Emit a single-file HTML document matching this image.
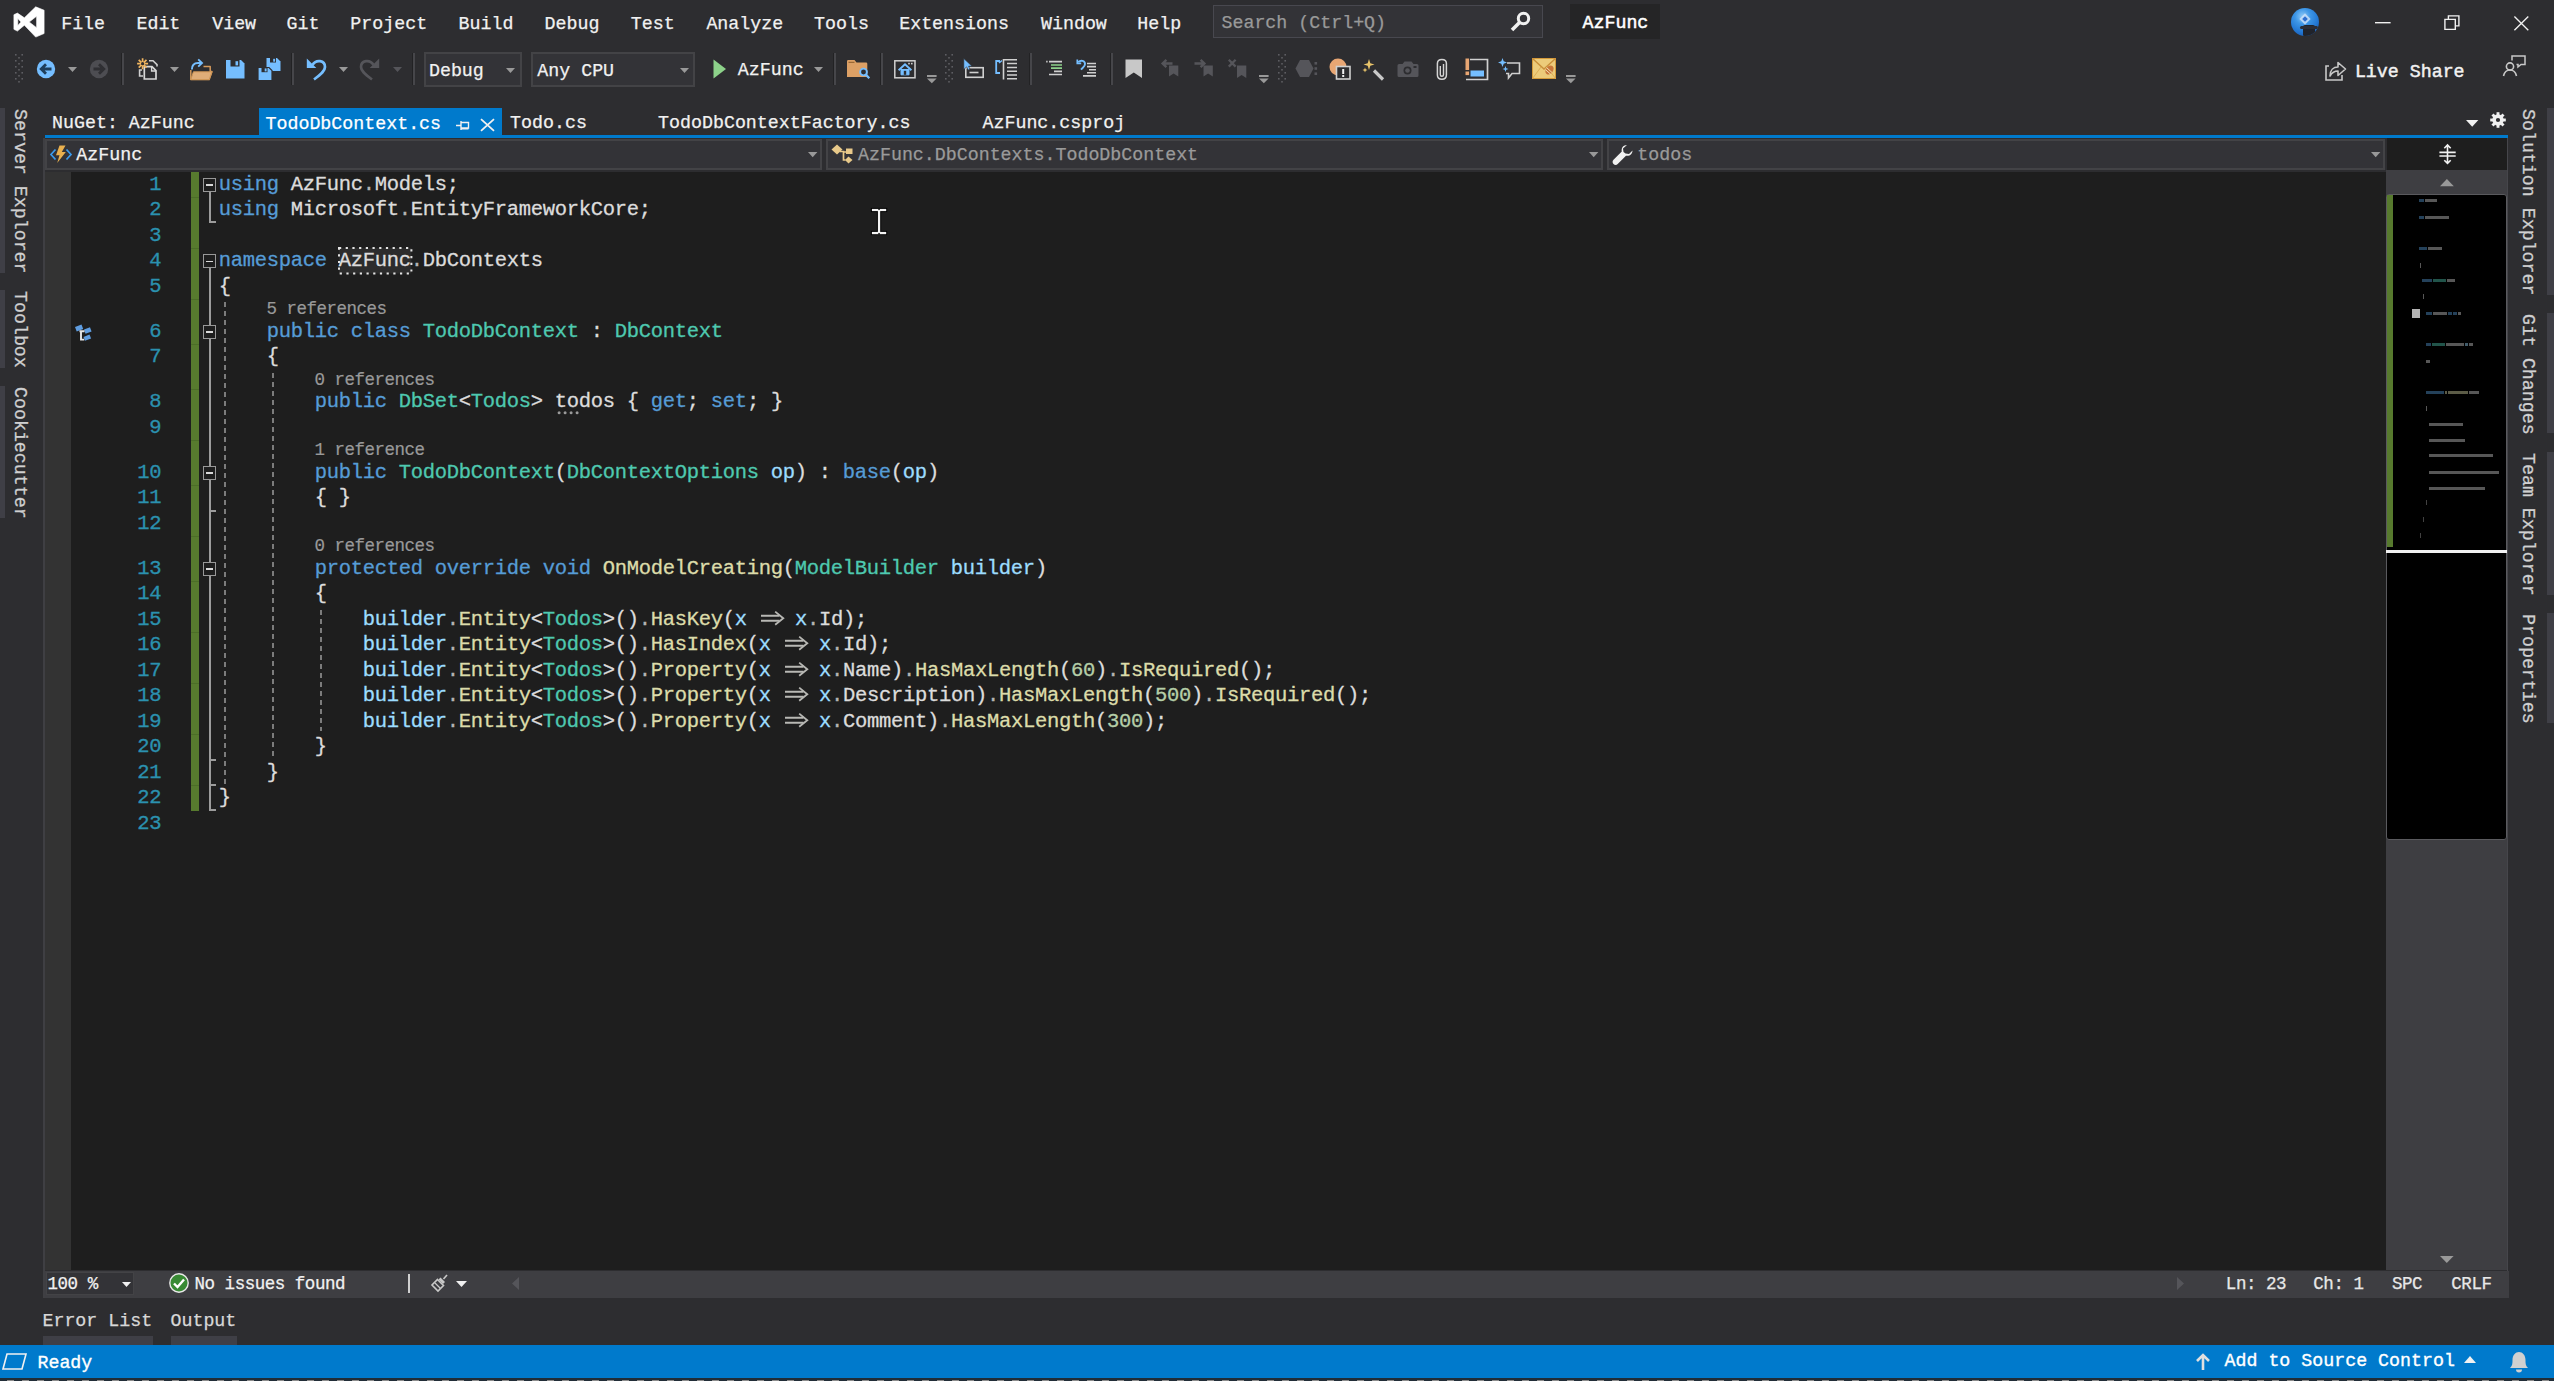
<!DOCTYPE html><html><head><meta charset="utf-8"><title>AzFunc</title><style>
*{box-sizing:border-box;margin:0;padding:0}
html,body{width:2554px;height:1381px;overflow:hidden;background:#2d2d30}
body{position:relative;font-family:"Liberation Mono",monospace;color:#f1f1f1;font-size:18px;line-height:1}
.a{position:absolute}
.t{position:absolute;white-space:pre;line-height:24px;height:24px}
.ui{-webkit-text-stroke:0.25px currentColor}
svg{position:absolute;overflow:visible}
.code{position:absolute;white-space:pre;font-size:20.5px;letter-spacing:-0.302px;line-height:25.5px;height:25.5px;color:#dcdcdc;left:218.7px;-webkit-text-stroke:0.3px currentColor}
.ln{position:absolute;white-space:pre;font-size:20.5px;letter-spacing:-0.302px;line-height:25.5px;height:25.5px;color:#2b91af;left:71px;width:90.3px;text-align:right;-webkit-text-stroke:0.3px currentColor}
.cl{position:absolute;white-space:pre;font-size:17.5px;letter-spacing:-0.502px;line-height:19.5px;height:19.5px;color:#999;-webkit-text-stroke:0.2px currentColor}
.k{color:#569cd6}.c{color:#4ec9b0}.m{color:#dcdcaa}.v{color:#9cdcfe}.o{color:#b4b4b4}.n{color:#b5cea8}
.arr{display:inline-block;width:24px;height:25.5px;position:relative;vertical-align:top}
.vt{position:absolute;white-space:pre;font-size:18.3px;line-height:20px;height:20px;color:#d0d0d0;transform-origin:0 0;transform:rotate(90deg);-webkit-text-stroke:0.3px currentColor}
</style></head><body>
<svg style="left:0px;top:0px" width="50" height="44" viewBox="0 0 50 44"><path d="M35.7 6.85L44.1 10.2V33.5L35.7 37.1L24.4 25.2L17.4 31.1L13.9 29.3V14.7L17.4 13.1L24.4 17.8Z M36.6 16.25V27.7L29.2 22Z M17.8 18.5V25.5L21 22Z" fill="#ffffff" fill-rule="evenodd" stroke="#fff" stroke-width="0.6" stroke-linejoin="round"/></svg>
<div class="t ui" style="left:61.17px;top:12.13px;color:#f1f1f1;font-size:18.3px;letter-spacing:0px;">File</div>
<div class="t ui" style="left:136.45px;top:12.13px;color:#f1f1f1;font-size:18.3px;letter-spacing:0px;">Edit</div>
<div class="t ui" style="left:212.21px;top:12.13px;color:#f1f1f1;font-size:18.3px;letter-spacing:0px;">View</div>
<div class="t ui" style="left:286.59px;top:12.13px;color:#f1f1f1;font-size:18.3px;letter-spacing:0px;">Git</div>
<div class="t ui" style="left:350.35px;top:12.13px;color:#f1f1f1;font-size:18.3px;letter-spacing:0px;">Project</div>
<div class="t ui" style="left:458.55px;top:12.13px;color:#f1f1f1;font-size:18.3px;letter-spacing:0px;">Build</div>
<div class="t ui" style="left:544.55px;top:12.13px;color:#f1f1f1;font-size:18.3px;letter-spacing:0px;">Debug</div>
<div class="t ui" style="left:630.82px;top:12.13px;color:#f1f1f1;font-size:18.3px;letter-spacing:0px;">Test</div>
<div class="t ui" style="left:706.40px;top:12.13px;color:#f1f1f1;font-size:18.3px;letter-spacing:0px;">Analyze</div>
<div class="t ui" style="left:814.02px;top:12.13px;color:#f1f1f1;font-size:18.3px;letter-spacing:0px;">Tools</div>
<div class="t ui" style="left:899.20px;top:12.13px;color:#f1f1f1;font-size:18.3px;letter-spacing:0px;">Extensions</div>
<div class="t ui" style="left:1041.00px;top:12.13px;color:#f1f1f1;font-size:18.3px;letter-spacing:0px;">Window</div>
<div class="t ui" style="left:1137.25px;top:12.13px;color:#f1f1f1;font-size:18.3px;letter-spacing:0px;">Help</div>
<div class="a" style="left:1213px;top:5px;width:330px;height:33px;background:#333337;border:1.5px solid #48484f"></div>
<div class="t ui" style="left:1221.49px;top:11.03px;color:#999;font-size:18.3px;letter-spacing:0px;">Search (Ctrl+Q)</div>
<svg style="left:1508px;top:10px" width="24" height="24" viewBox="0 0 24 24"><circle cx="15.5" cy="8.5" r="5.2" fill="none" stroke="#f1f1f1" stroke-width="3"/><path d="M11.5 12.5 L4 20" stroke="#f1f1f1" stroke-width="3.6" stroke-linecap="butt"/></svg>
<div class="a" style="left:1570px;top:4px;width:90px;height:35px;background:#252526;"></div>
<div class="t ui" style="left:1582.50px;top:11.03px;color:#ffffff;font-size:18.3px;letter-spacing:0px;-webkit-text-stroke:0.5px #fff">AzFunc</div>
<div class="a" style="left:2291px;top:8.3px;width:28px;height:28px;border-radius:50%;background:radial-gradient(circle at 42% 30%,#8ec9f7 0%,#3d96e6 30%,#2378d4 60%,#14489a 100%);overflow:hidden"><div class="a" style="left:11.5px;top:17px;width:12px;height:11px;background:#20232b;border-radius:2px 2px 1px 1px"></div><div class="a" style="left:8.5px;top:18px;width:18px;height:3px;background:#2a2d36;border-radius:2px"></div><div class="a" style="left:9.5px;top:6.5px;width:8px;height:8px;background:#d5e6fa;opacity:.75;transform:rotate(45deg)"></div><div class="a" style="left:11.5px;top:8.5px;width:4px;height:4px;background:#2e6fd0;transform:rotate(45deg)"></div></div>
<svg style="left:2375px;top:21.5px" width="16" height="2" viewBox="0 0 16 2"><rect width="15.6" height="1.4" fill="#f1f1f1"/></svg>
<svg style="left:2444px;top:15.3px" width="16" height="16" viewBox="0 0 16 16"><path d="M0.9 4.4H11.3V14.4H0.9Z M4.4 4.4V0.9H14.9V10.9H11.3" fill="none" stroke="#f1f1f1" stroke-width="1.4"/></svg>
<svg style="left:2513.5px;top:15.8px" width="15" height="15" viewBox="0 0 15 15"><path d="M0.4 0.4L14.3 14.3M14.3 0.4L0.4 14.3" stroke="#f1f1f1" stroke-width="1.35"/></svg>
<svg style="left:14.5px;top:54px" width="8" height="30" viewBox="0 0 8 30"><rect x="0" y="0" width="1.6" height="1.6" fill="#5e5e62"/><rect x="6.4" y="0" width="1.6" height="1.6" fill="#5e5e62"/><rect x="3.2" y="3" width="1.6" height="1.6" fill="#5e5e62"/><rect x="0" y="6" width="1.6" height="1.6" fill="#5e5e62"/><rect x="6.4" y="6" width="1.6" height="1.6" fill="#5e5e62"/><rect x="3.2" y="9" width="1.6" height="1.6" fill="#5e5e62"/><rect x="0" y="12" width="1.6" height="1.6" fill="#5e5e62"/><rect x="6.4" y="12" width="1.6" height="1.6" fill="#5e5e62"/><rect x="3.2" y="15" width="1.6" height="1.6" fill="#5e5e62"/><rect x="0" y="18" width="1.6" height="1.6" fill="#5e5e62"/><rect x="6.4" y="18" width="1.6" height="1.6" fill="#5e5e62"/><rect x="3.2" y="21" width="1.6" height="1.6" fill="#5e5e62"/><rect x="0" y="24" width="1.6" height="1.6" fill="#5e5e62"/><rect x="6.4" y="24" width="1.6" height="1.6" fill="#5e5e62"/><rect x="3.2" y="27" width="1.6" height="1.6" fill="#5e5e62"/></svg>
<svg style="left:36px;top:59px" width="20" height="20" viewBox="0 0 20 20"><circle cx="10" cy="10" r="9.2" fill="#75beff"/><path d="M15.5 10H6.5M10 5.2L5.2 10L10 14.8" stroke="#1f3f5c" stroke-width="2.8" fill="none"/></svg>
<svg style="left:67.5px;top:67.0px" width="9" height="5.0" viewBox="0 0 9 5.0"><path d="M0 0H9L4.5 5.0Z" fill="#999"/></svg>
<svg style="left:89px;top:59px" width="20" height="20" viewBox="0 0 20 20"><circle cx="10" cy="10" r="9.2" fill="#4d4d52"/><path d="M4.5 10H13.5M10 5.2L14.8 10L10 14.8" stroke="#2f2f33" stroke-width="2.8" fill="none"/></svg>
<div class="a" style="left:120.5px;top:53px;width:1.7px;height:32px;background:#222224;"></div>
<div class="a" style="left:122.2px;top:53px;width:1.8px;height:32px;background:#46464a;"></div>
<svg style="left:137px;top:58px" width="22" height="24" viewBox="0 0 22 24"><path d="M12 2.7H16L20 6.6V8.5" fill="none" stroke="#d0d0d0" stroke-width="1.6"/><path d="M5 12H2.6V18H6" fill="none" stroke="#d0d0d0" stroke-width="1.6"/><path d="M7.3 8.6H15L19 12.6V21H7.3Z" fill="#2d2d30" stroke="#d8d8d8" stroke-width="1.7"/><path d="M14.6 8.6V13H19" fill="none" stroke="#d8d8d8" stroke-width="1.4"/><g stroke="#f0b560" stroke-width="1.7"><path d="M5.6 0.2V11.2M0.1 5.7H11.1M1.7 1.8L9.5 9.6M9.5 1.8L1.7 9.6"/></g><circle cx="5.6" cy="5.7" r="1.6" fill="#2d2d30"/></svg>
<svg style="left:169.5px;top:67.0px" width="9" height="5.0" viewBox="0 0 9 5.0"><path d="M0 0H9L4.5 5.0Z" fill="#999"/></svg>
<svg style="left:189px;top:57px" width="24" height="24" viewBox="0 0 24 24"><path d="M1.8 13V22.6H20.2L23 14.6H21.2V9.6H14.5" fill="none" stroke="#d49a5c" stroke-width="1.5" stroke-linejoin="round"/><path d="M4.4 14.8H23L20.2 22.6H1.8Z" fill="#e0ad78" stroke="#cf9555" stroke-width="1"/><path d="M2.9 12.6C2.9 8 5.5 6 9 6H12.4" fill="none" stroke="#75beff" stroke-width="1.9"/><path d="M9.2 2.4L13 6L9.2 9.6" fill="none" stroke="#75beff" stroke-width="1.9"/></svg>
<svg style="left:226px;top:60px" width="19" height="19" viewBox="0 0 19 19"><path d="M0 0H15L18.5 3.5V18.5H0Z" fill="#75beff"/><rect x="4.5" y="0" width="9" height="6.5" fill="#2d2d30"/><rect x="9.5" y="1.2" width="2.6" height="4.2" fill="#75beff"/></svg>
<svg style="left:258px;top:58px" width="23" height="23" viewBox="0 0 23 23"><path d="M8.5 0H19L22.5 3.5V13H8.5Z" fill="#75beff"/><rect x="12" y="0" width="6" height="4.5" fill="#2d2d30"/><rect x="15.2" y="0.8" width="1.9" height="2.9" fill="#75beff"/><path d="M0 9.5H11L14 12.5V22.5H0Z" fill="#75beff" stroke="#2d2d30" stroke-width="1.2"/><rect x="3.5" y="9.8" width="6" height="4.4" fill="#2d2d30"/><rect x="6.7" y="10.4" width="1.9" height="3" fill="#75beff"/></svg>
<div class="a" style="left:290.5px;top:53px;width:1.7px;height:32px;background:#222224;"></div>
<div class="a" style="left:292.2px;top:53px;width:1.8px;height:32px;background:#46464a;"></div>
<svg style="left:305px;top:58px" width="22" height="24" viewBox="0 0 22 24"><path d="M1.8 0.5V10H11.3Z" fill="#75beff"/><path d="M7.5 7C11 1 20 2 20 9C20 13 16.5 16 9 21.5" fill="none" stroke="#75beff" stroke-width="2.7"/></svg>
<svg style="left:338.5px;top:67.0px" width="9" height="5.0" viewBox="0 0 9 5.0"><path d="M0 0H9L4.5 5.0Z" fill="#999"/></svg>
<svg style="left:359px;top:58px" width="22" height="24" viewBox="0 0 22 24"><path d="M20.2 0.5V10H10.7Z" fill="#55555a"/><path d="M14.5 7C11 1 2 2 2 9C2 13 5.5 16 13 21.5" fill="none" stroke="#55555a" stroke-width="2.7"/></svg>
<svg style="left:392.5px;top:67.0px" width="9" height="5.0" viewBox="0 0 9 5.0"><path d="M0 0H9L4.5 5.0Z" fill="#55555a"/></svg>
<div class="a" style="left:411.5px;top:53px;width:1.7px;height:32px;background:#222224;"></div>
<div class="a" style="left:413.2px;top:53px;width:1.8px;height:32px;background:#46464a;"></div>
<div class="a" style="left:424px;top:52px;width:98px;height:35px;background:#333337;border:2px solid #434346"></div>
<div class="t ui" style="left:428.95px;top:58.63px;color:#f1f1f1;font-size:18.3px;letter-spacing:0px;">Debug</div>
<svg style="left:505.5px;top:67.5px" width="9" height="5.0" viewBox="0 0 9 5.0"><path d="M0 0H9L4.5 5.0Z" fill="#999"/></svg>
<div class="a" style="left:531px;top:52px;width:164px;height:35px;background:#333337;border:2px solid #434346"></div>
<div class="t ui" style="left:537.30px;top:58.63px;color:#f1f1f1;font-size:18.3px;letter-spacing:0px;">Any CPU</div>
<svg style="left:679.5px;top:67.5px" width="9" height="5.0" viewBox="0 0 9 5.0"><path d="M0 0H9L4.5 5.0Z" fill="#999"/></svg>
<svg style="left:713px;top:59px" width="14" height="20" viewBox="0 0 14 20"><path d="M0.5 0.5L13 10L0.5 19.5Z" fill="#8dd28a"/></svg>
<div class="t ui" style="left:737.80px;top:58.13px;color:#f1f1f1;font-size:18.3px;letter-spacing:0px;">AzFunc</div>
<svg style="left:813.5px;top:67.0px" width="9" height="5.0" viewBox="0 0 9 5.0"><path d="M0 0H9L4.5 5.0Z" fill="#999"/></svg>
<div class="a" style="left:832.5px;top:53px;width:1.7px;height:32px;background:#222224;"></div>
<div class="a" style="left:834.2px;top:53px;width:1.8px;height:32px;background:#46464a;"></div>
<svg style="left:846px;top:58px" width="25" height="24" viewBox="0 0 25 24"><path d="M1 3.2Q1 2 2.2 2H8.5L10.5 4.5H20Q21.3 4.5 21.3 5.8V19H1Z" fill="#dca065"/><path d="M2.5 4.3H8.5" stroke="#8a5a2a" stroke-width="1"/><circle cx="17.5" cy="14" r="3.4" fill="#2d2d30" stroke="#75beff" stroke-width="1.9"/><path d="M19.8 16.6L23.3 20.2" stroke="#75beff" stroke-width="2.3"/></svg>
<div class="a" style="left:879.5px;top:53px;width:1.7px;height:32px;background:#222224;"></div>
<div class="a" style="left:881.2px;top:53px;width:1.8px;height:32px;background:#46464a;"></div>
<svg style="left:894px;top:59.8px" width="22" height="20" viewBox="0 0 22 20"><rect x="0.8" y="0.8" width="20.2" height="17" fill="none" stroke="#d0d0d0" stroke-width="1.5"/><path d="M4.6 10.2L11 4.4L17.4 10.2" fill="none" stroke="#75beff" stroke-width="1.9"/><path d="M7 9V14.8H15V9" fill="#75beff" stroke="#75beff" stroke-width="1"/><rect x="9.8" y="10.8" width="2.4" height="4" fill="#2d2d30"/><rect x="14.2" y="2.8" width="1.6" height="1.6" fill="#d0d0d0"/><rect x="17" y="2.8" width="1.6" height="1.6" fill="#d0d0d0"/></svg>
<svg style="left:926.8px;top:75.1px" width="10" height="9" viewBox="0 0 10 9"><rect x="0" y="0" width="9.6" height="2" fill="#999"/><path d="M0 3.6H9.6L4.8 8.2Z" fill="#999"/></svg>
<svg style="left:945px;top:54px" width="8" height="30" viewBox="0 0 8 30"><rect x="0" y="0" width="1.6" height="1.6" fill="#5e5e62"/><rect x="6.4" y="0" width="1.6" height="1.6" fill="#5e5e62"/><rect x="3.2" y="3" width="1.6" height="1.6" fill="#5e5e62"/><rect x="0" y="6" width="1.6" height="1.6" fill="#5e5e62"/><rect x="6.4" y="6" width="1.6" height="1.6" fill="#5e5e62"/><rect x="3.2" y="9" width="1.6" height="1.6" fill="#5e5e62"/><rect x="0" y="12" width="1.6" height="1.6" fill="#5e5e62"/><rect x="6.4" y="12" width="1.6" height="1.6" fill="#5e5e62"/><rect x="3.2" y="15" width="1.6" height="1.6" fill="#5e5e62"/><rect x="0" y="18" width="1.6" height="1.6" fill="#5e5e62"/><rect x="6.4" y="18" width="1.6" height="1.6" fill="#5e5e62"/><rect x="3.2" y="21" width="1.6" height="1.6" fill="#5e5e62"/><rect x="0" y="24" width="1.6" height="1.6" fill="#5e5e62"/><rect x="6.4" y="24" width="1.6" height="1.6" fill="#5e5e62"/><rect x="3.2" y="27" width="1.6" height="1.6" fill="#5e5e62"/></svg>
<svg style="left:962px;top:58px" width="22" height="22" viewBox="0 0 22 22"><rect x="3.8" y="9.7" width="17.4" height="9.6" fill="none" stroke="#d0d0d0" stroke-width="1.6"/><path d="M7.5 14.5H16.5" stroke="#d0d0d0" stroke-width="1.6"/><path d="M1.8 0.6V11.4L4.7 8.9L6.2 12L8 11.2L6.6 8.2H10Z" fill="#75beff" stroke="#2d2d30" stroke-width="0.6"/></svg>
<svg style="left:995px;top:58px" width="24" height="24" viewBox="0 0 24 24"><path d="M5 3H1.2V15H5" fill="none" stroke="#75beff" stroke-width="1.8"/><path d="M4 5L7 2.5" stroke="#75beff" stroke-width="1.6"/><path d="M8.5 1V21.5" stroke="#d0d0d0" stroke-width="1.6"/><path d="M8.5 1.8H22M12 5.6H22M12 9.4H22M12 13.2H22M12 17H22M12 20.8H22" stroke="#d0d0d0" stroke-width="1.5"/></svg>
<div class="a" style="left:1028.5px;top:53px;width:1.7px;height:32px;background:#222224;"></div>
<div class="a" style="left:1030.2px;top:53px;width:1.8px;height:32px;background:#46464a;"></div>
<svg style="left:1045px;top:60px" width="18" height="16" viewBox="0 0 18 16"><path d="M1.2 1.6H2.6M4 1.6H17" stroke="#d0d0d0" stroke-width="1.7"/><path d="M6 5H17M6 8.2H17" stroke="#8dd28a" stroke-width="1.7"/><path d="M9 11.3H17M4 14.5H17" stroke="#d0d0d0" stroke-width="1.7"/></svg>
<svg style="left:1076px;top:59px" width="21" height="19" viewBox="0 0 21 19"><path d="M2.2 3.2C4.8 0.6 9 1.6 9 5C9 7.6 6.6 8.4 5 10.6" fill="none" stroke="#75beff" stroke-width="1.9"/><path d="M1.3 0.6V4.4H5.2" fill="none" stroke="#75beff" stroke-width="1.7"/><path d="M11 4.5H20M11 7.6H20M13 10.7H20M11 13.8H20M7 16.9H20" stroke="#d0d0d0" stroke-width="1.6"/></svg>
<div class="a" style="left:1109.5px;top:53px;width:1.7px;height:32px;background:#222224;"></div>
<div class="a" style="left:1111.2px;top:53px;width:1.8px;height:32px;background:#46464a;"></div>
<svg style="left:1125px;top:59px" width="18" height="20" viewBox="0 0 18 20"><path d="M0.5 0.5H17V19L8.8 13.5L0.5 19Z" fill="#c8c8c8"/></svg>
<svg style="left:1160px;top:59px" width="20" height="20" viewBox="0 0 20 20"><path d="M9 6.5H18.3V17.5L13.6 14.5L9 17.5Z" fill="#55555a"/><path d="M12.5 4.5H3M6.4 0.8L2.6 4.5L6.4 8.2" stroke="#55555a" stroke-width="2.4" fill="none"/></svg>
<svg style="left:1194px;top:59px" width="20" height="20" viewBox="0 0 20 20"><path d="M9.5 6.5H18.8V17.5L14.1 14.5L9.5 17.5Z" fill="#55555a"/><path d="M0.5 4.5H10M6.6 0.8L10.4 4.5L6.6 8.2" stroke="#55555a" stroke-width="2.4" fill="none"/></svg>
<svg style="left:1228px;top:59px" width="20" height="20" viewBox="0 0 20 20"><path d="M9 6.5H18.3V19L13.6 16L9 19Z" fill="#55555a"/><path d="M0.8 0.8L7.6 7.6M7.6 0.8L0.8 7.6" stroke="#55555a" stroke-width="2.3" fill="none"/></svg>
<svg style="left:1259.3px;top:75.1px" width="10" height="9" viewBox="0 0 10 9"><rect x="0" y="0" width="9.6" height="2" fill="#999"/><path d="M0 3.6H9.6L4.8 8.2Z" fill="#999"/></svg>
<svg style="left:1278px;top:54px" width="8" height="30" viewBox="0 0 8 30"><rect x="0" y="0" width="1.6" height="1.6" fill="#5e5e62"/><rect x="6.4" y="0" width="1.6" height="1.6" fill="#5e5e62"/><rect x="3.2" y="3" width="1.6" height="1.6" fill="#5e5e62"/><rect x="0" y="6" width="1.6" height="1.6" fill="#5e5e62"/><rect x="6.4" y="6" width="1.6" height="1.6" fill="#5e5e62"/><rect x="3.2" y="9" width="1.6" height="1.6" fill="#5e5e62"/><rect x="0" y="12" width="1.6" height="1.6" fill="#5e5e62"/><rect x="6.4" y="12" width="1.6" height="1.6" fill="#5e5e62"/><rect x="3.2" y="15" width="1.6" height="1.6" fill="#5e5e62"/><rect x="0" y="18" width="1.6" height="1.6" fill="#5e5e62"/><rect x="6.4" y="18" width="1.6" height="1.6" fill="#5e5e62"/><rect x="3.2" y="21" width="1.6" height="1.6" fill="#5e5e62"/><rect x="0" y="24" width="1.6" height="1.6" fill="#5e5e62"/><rect x="6.4" y="24" width="1.6" height="1.6" fill="#5e5e62"/><rect x="3.2" y="27" width="1.6" height="1.6" fill="#5e5e62"/></svg>
<svg style="left:1295px;top:59px" width="24" height="20" viewBox="0 0 24 20"><path d="M5 1H14L18.5 9.5L14 18H5L0.5 9.5Z" fill="#55555a"/><rect x="19.5" y="3" width="2.6" height="2.6" fill="#55555a"/><rect x="19.5" y="8.2" width="2.6" height="2.6" fill="#55555a"/><rect x="19.5" y="13.4" width="2.6" height="2.6" fill="#55555a"/></svg>
<svg style="left:1329px;top:58px" width="23" height="23" viewBox="0 0 23 23"><circle cx="9" cy="9" r="8.5" fill="#e8a673"/><rect x="7.5" y="8.5" width="13.5" height="12.5" fill="#2d2d30" stroke="#d0d0d0" stroke-width="1.6"/><rect x="13.2" y="11" width="2" height="5" fill="#f1f1f1"/><rect x="13.2" y="17" width="2" height="2" fill="#f1f1f1"/></svg>
<svg style="left:1362px;top:58px" width="23" height="23" viewBox="0 0 23 23"><path d="M12 12.5L21 21.5" stroke="#c8c8c8" stroke-width="3.2"/><path d="M7 1L8.3 5.2L12.5 6.5L8.3 7.8L7 12L5.7 7.8L1.5 6.5L5.7 5.2Z" fill="#e9c46a"/><path d="M3 9.5L3.7 11.3L5.5 12L3.7 12.7L3 14.5L2.3 12.7L0.5 12L2.3 11.3Z" fill="#e9c46a"/></svg>
<svg style="left:1397px;top:61px" width="23" height="17" viewBox="0 0 23 17"><path d="M0.5 4.5Q0.5 3 2 3H5.5L7.5 0.5H14.5L16.5 3H20Q21.5 3 21.5 4.5V14.5Q21.5 16 20 16H2Q0.5 16 0.5 14.5Z" fill="#55555a"/><circle cx="10.5" cy="9.5" r="4" fill="#2d2d30"/><circle cx="10.5" cy="9.5" r="2.3" fill="#55555a"/><rect x="16.5" y="5" width="3" height="2" fill="#2d2d30"/></svg>
<svg style="left:1435px;top:58px" width="14" height="23" viewBox="0 0 14 23"><path d="M2.4 9.5V5.6Q2.4 1.6 6.9 1.6Q11.4 1.6 11.4 5.6V17Q11.4 21.2 6.9 21.2Q2.4 21.2 2.4 17V9.5" fill="none" stroke="#d4d4d4" stroke-width="1.5"/><path d="M5.3 8V16.8Q5.3 18.3 6.9 18.3Q8.5 18.3 8.5 16.8V6" fill="none" stroke="#d4d4d4" stroke-width="1.4"/></svg>
<svg style="left:1465px;top:58px" width="24" height="23" viewBox="0 0 24 23"><path d="M5 1.5H22.5V21.5H1" fill="none" stroke="#d0d0d0" stroke-width="1.7"/><rect x="0.5" y="0.5" width="3.6" height="11.5" fill="#e8a673"/><rect x="0.5" y="13.5" width="3.6" height="3.6" fill="#e8a673"/><rect x="5.5" y="12.5" width="13.5" height="6" fill="#75beff"/></svg>
<svg style="left:1498px;top:58px" width="24" height="23" viewBox="0 0 24 23"><path d="M9 4H21.5V14.5H14L10.5 19V14.5H8" fill="none" stroke="#d0d0d0" stroke-width="1.6" transform="translate(0,1)"/><path d="M4.5 0L5.7 3.3L9 4.5L5.7 5.7L4.5 9L3.3 5.7L0 4.5L3.3 3.3Z" fill="#75beff"/><path d="M7.5 8L8.3 10.2L10.5 11L8.3 11.8L7.5 14L6.7 11.8L4.5 11L6.7 10.2Z" fill="#75beff"/></svg>
<svg style="left:1532px;top:58px" width="25" height="22" viewBox="0 0 25 22"><rect x="0.5" y="0.5" width="23" height="20" fill="#eccb7a" stroke="#d49a3a" stroke-width="1"/><path d="M0.5 0.5L12 11L23.5 0.5" fill="none" stroke="#c98f3a" stroke-width="1.4"/><path d="M0.5 20.5L9 9M23.5 20.5L15 9" fill="none" stroke="#dcae58" stroke-width="1"/><ellipse cx="17.5" cy="12" rx="3.6" ry="5" fill="#c8763a" transform="rotate(35 17.5 12)"/><path d="M14.5 9.5L20 14.5M13.8 12L18.8 16.3" stroke="#f0e0b0" stroke-width="1"/></svg>
<svg style="left:1566.3px;top:75.1px" width="10" height="9" viewBox="0 0 10 9"><rect x="0" y="0" width="9.6" height="2" fill="#999"/><path d="M0 3.6H9.6L4.8 8.2Z" fill="#999"/></svg>
<svg style="left:2325px;top:59px" width="22" height="22" viewBox="0 0 22 22"><path d="M4 7H1V21H17V16" fill="none" stroke="#c8c8c8" stroke-width="1.6"/><path d="M5 17C5 11 8.5 8 13 8V3.5L20.5 10L13 16.5V12C9.5 12 7 13.5 5 17Z" fill="none" stroke="#c8c8c8" stroke-width="1.6" stroke-linejoin="round"/></svg>
<div class="t ui" style="left:2354.88px;top:59.63px;color:#f1f1f1;font-size:18.3px;letter-spacing:0px;-webkit-text-stroke:0.45px #f1f1f1">Live Share</div>
<svg style="left:2503px;top:55px" width="24" height="24" viewBox="0 0 24 24"><circle cx="7" cy="11.5" r="3.6" fill="none" stroke="#c8c8c8" stroke-width="1.6"/><path d="M0.5 21C1.5 16.5 4 15 7 15C10 15 12.5 16.5 13.5 21" fill="none" stroke="#c8c8c8" stroke-width="1.6"/><path d="M9 5.5V1H22V9.5H18L15 12V9.5H13.5" fill="none" stroke="#c8c8c8" stroke-width="1.5"/></svg>
<div class="a" style="left:0px;top:108px;width:5px;height:165px;background:#3f3f46;"></div>
<div class="vt" style="left:30.4px;top:108.6px">Server Explorer</div>
<div class="a" style="left:0px;top:290px;width:5px;height:78px;background:#3f3f46;"></div>
<div class="vt" style="left:30.4px;top:290.6px">Toolbox</div>
<div class="a" style="left:0px;top:386px;width:5px;height:132px;background:#3f3f46;"></div>
<div class="vt" style="left:30.4px;top:386.6px">Cookiecutter</div>
<div class="a" style="left:2547px;top:108px;width:7px;height:187px;background:#3f3f46;"></div>
<div class="vt" style="left:2537.8px;top:108.6px">Solution Explorer</div>
<div class="a" style="left:2547px;top:313px;width:7px;height:120px;background:#3f3f46;"></div>
<div class="vt" style="left:2537.8px;top:313.6px">Git Changes</div>
<div class="a" style="left:2547px;top:452px;width:7px;height:143px;background:#3f3f46;"></div>
<div class="vt" style="left:2537.8px;top:452.6px">Team Explorer</div>
<div class="a" style="left:2547px;top:613px;width:7px;height:110px;background:#3f3f46;"></div>
<div class="vt" style="left:2537.8px;top:613.6px">Properties</div>
<div class="t ui" style="left:52.05px;top:111.13px;color:#f1f1f1;font-size:18.3px;letter-spacing:0px;">NuGet: AzFunc</div>
<div class="a" style="left:259px;top:108px;width:243px;height:28px;background:#007acc;"></div>
<div class="t ui" style="left:265.52px;top:111.63px;color:#ffffff;font-size:18.3px;letter-spacing:0px;">TodoDbContext.cs</div>
<svg style="left:455.5px;top:119.3px" width="15" height="13" viewBox="0 0 15 13"><path d="M0 6.5H5M5 2V11M5 3.5H12.5V9H5M12.5 9.8H5" fill="none" stroke="#f1f1f1" stroke-width="1.4"/></svg>
<svg style="left:480.2px;top:118.2px" width="15" height="14" viewBox="0 0 15 14"><path d="M1 1.2L14 12.8M14 1.2L1 12.8" stroke="#f1f1f1" stroke-width="1.8"/></svg>
<div class="t ui" style="left:510.12px;top:111.13px;color:#f1f1f1;font-size:18.3px;letter-spacing:0px;">Todo.cs</div>
<div class="t ui" style="left:658.12px;top:111.13px;color:#f1f1f1;font-size:18.3px;letter-spacing:0px;">TodoDbContextFactory.cs</div>
<div class="t ui" style="left:982.50px;top:111.13px;color:#f1f1f1;font-size:18.3px;letter-spacing:0px;">AzFunc.csproj</div>
<svg style="left:2465.8px;top:119.65px" width="12.4" height="6.7" viewBox="0 0 12.4 6.7"><path d="M0 0H12.4L6.2 6.7Z" fill="#f1f1f1"/></svg>
<svg style="left:2490.4px;top:111.7px" width="16" height="16" viewBox="0 0 16 16"><circle cx="8" cy="8" r="3.9" fill="none" stroke="#f1f1f1" stroke-width="3.6"/><path d="M13.00 8.00L15.80 8.00" stroke="#f1f1f1" stroke-width="2.9"/><path d="M11.54 11.54L13.52 13.52" stroke="#f1f1f1" stroke-width="2.9"/><path d="M8.00 13.00L8.00 15.80" stroke="#f1f1f1" stroke-width="2.9"/><path d="M4.46 11.54L2.48 13.52" stroke="#f1f1f1" stroke-width="2.9"/><path d="M3.00 8.00L0.20 8.00" stroke="#f1f1f1" stroke-width="2.9"/><path d="M4.46 4.46L2.48 2.48" stroke="#f1f1f1" stroke-width="2.9"/><path d="M8.00 3.00L8.00 0.20" stroke="#f1f1f1" stroke-width="2.9"/><path d="M11.54 4.46L13.52 2.48" stroke="#f1f1f1" stroke-width="2.9"/></svg>
<div class="a" style="left:45px;top:135px;width:2463px;height:3px;background:#007acc;"></div>
<div class="a" style="left:43px;top:138px;width:2px;height:34px;background:#3f3f43;"></div>
<div class="a" style="left:45px;top:138.6px;width:777px;height:31.4px;background:#333337;border:2px solid #434346"></div>
<div class="a" style="left:826px;top:138.6px;width:777px;height:31.4px;background:#333337;border:2px solid #434346"></div>
<div class="a" style="left:1607px;top:138.6px;width:777.5px;height:31.4px;background:#333337;border:2px solid #434346"></div>
<div class="t ui" style="left:76.30px;top:143.13px;color:#f1f1f1;font-size:18.3px;letter-spacing:0px;">AzFunc</div>
<div class="t ui" style="left:858.00px;top:143.13px;color:#9a9a9a;font-size:18.3px;letter-spacing:0px;">AzFunc.DbContexts.TodoDbContext</div>
<div class="t ui" style="left:1637.30px;top:143.13px;color:#9a9a9a;font-size:18.3px;letter-spacing:0px;">todos</div>
<svg style="left:807.8px;top:151.70000000000002px" width="9.4" height="5.2" viewBox="0 0 9.4 5.2"><path d="M0 0H9.4L4.7 5.2Z" fill="#999"/></svg>
<svg style="left:1588.8px;top:151.70000000000002px" width="9.4" height="5.2" viewBox="0 0 9.4 5.2"><path d="M0 0H9.4L4.7 5.2Z" fill="#999"/></svg>
<svg style="left:2370.6000000000004px;top:151.70000000000002px" width="9.4" height="5.2" viewBox="0 0 9.4 5.2"><path d="M0 0H9.4L4.7 5.2Z" fill="#999"/></svg>
<svg style="left:50px;top:145px" width="22" height="19" viewBox="0 0 22 19"><path d="M5.5 4.5L1 9.5L5.5 14.5M16.5 4.5L21 9.5L16.5 14.5" fill="none" stroke="#3a9cf0" stroke-width="1.7"/><path d="M9.5 0.5H15.5L11.8 7H15.8L7.2 18L9.5 10.2H6Z" fill="#e8b04f"/></svg>
<svg style="left:831px;top:144px" width="23" height="21" viewBox="0 0 23 21"><path d="M6 0.5L11.5 5.5L6 10.5L0.5 5.5Z" fill="#e8c98a"/><path d="M17.5 12.5L21.5 16L17.5 19.5L14 16Z" fill="#e8c98a"/><path d="M15 4.5H21.5V10H15Z" fill="#e8c98a"/><path d="M9 7.5H12.5V16H14.5M12.5 8H15" fill="none" stroke="#e8c98a" stroke-width="1.7"/></svg>
<svg style="left:1612px;top:144px" width="22" height="22" viewBox="0 0 22 22"><path d="M15 1C11.5 1 9 3.8 9.8 7.5L1.5 15.8C0.3 17 0.3 18.8 1.5 20C2.7 21.2 4.5 21.2 5.7 20L14 11.7C17.7 12.5 20.5 10 20.5 6.5L17 10L13.5 9.5L11.5 8L11 4.5L15 1Z" fill="#f1f1f1"/></svg>
<div class="a" style="left:2387px;top:138px;width:120.5px;height:31.6px;background:#1e1e1e;"></div>
<svg style="left:2438.5px;top:144px" width="17" height="20.4" viewBox="0 0 17 20.4"><path d="M8.5 1V19.4M5.3 4.2L8.5 1L11.7 4.2M5.3 16.2L8.5 19.4L11.7 16.2" fill="none" stroke="#f1f1f1" stroke-width="1.6"/><path d="M0.4 8.4H16.7M0.4 12H16.7" stroke="#f1f1f1" stroke-width="1.7"/></svg>
<div class="a" style="left:43px;top:172px;width:2px;height:1126px;background:#3f3f43;"></div>
<div class="a" style="left:45px;top:172px;width:25.5px;height:1098px;background:#333333;"></div>
<div class="a" style="left:70.5px;top:172px;width:2315.5px;height:1098px;background:#1e1e1e;"></div>
<div class="a" style="left:191px;top:172.0px;width:8px;height:638.5px;background:#577a2e;"></div>
<div class="a" style="left:191px;top:196.5px;width:8px;height:1px;background:#4c6d28;"></div>
<div class="a" style="left:191px;top:247.5px;width:8px;height:1px;background:#4c6d28;"></div>
<div class="a" style="left:191px;top:298.5px;width:8px;height:1px;background:#4c6d28;"></div>
<div class="a" style="left:191px;top:343.5px;width:8px;height:1px;background:#4c6d28;"></div>
<div class="a" style="left:191px;top:388.5px;width:8px;height:1px;background:#4c6d28;"></div>
<div class="a" style="left:191px;top:439.5px;width:8px;height:1px;background:#4c6d28;"></div>
<div class="a" style="left:191px;top:484.5px;width:8px;height:1px;background:#4c6d28;"></div>
<div class="a" style="left:191px;top:535.5px;width:8px;height:1px;background:#4c6d28;"></div>
<div class="a" style="left:191px;top:580.5px;width:8px;height:1px;background:#4c6d28;"></div>
<div class="a" style="left:191px;top:631.5px;width:8px;height:1px;background:#4c6d28;"></div>
<div class="a" style="left:191px;top:682.5px;width:8px;height:1px;background:#4c6d28;"></div>
<div class="a" style="left:191px;top:733.5px;width:8px;height:1px;background:#4c6d28;"></div>
<div class="a" style="left:191px;top:784.5px;width:8px;height:1px;background:#4c6d28;"></div>
<div class="a" style="left:224.2px;top:302.0px;width:1.8px;height:482.0px;background:repeating-linear-gradient(to bottom,#7c7c7c 0,#7c7c7c 5px,transparent 5px,transparent 9px)"></div>
<div class="a" style="left:272.2px;top:372.5px;width:1.8px;height:384.0px;background:repeating-linear-gradient(to bottom,#7c7c7c 0,#7c7c7c 5px,transparent 5px,transparent 9px)"></div>
<div class="a" style="left:320.2px;top:609.5px;width:1.8px;height:121.5px;background:repeating-linear-gradient(to bottom,#7c7c7c 0,#7c7c7c 5px,transparent 5px,transparent 9px)"></div>
<div class="a" style="left:209px;top:190.5px;width:2px;height:32.0px;background:#9c9c9c;"></div>
<div class="a" style="left:209px;top:221.0px;width:7px;height:2px;background:#9c9c9c;"></div>
<div class="a" style="left:209px;top:267.0px;width:2px;height:543.5px;background:#9c9c9c;"></div>
<div class="a" style="left:209px;top:509.5px;width:7px;height:2px;background:#9c9c9c;"></div>
<div class="a" style="left:209px;top:758.5px;width:7px;height:2px;background:#9c9c9c;"></div>
<div class="a" style="left:209px;top:784.0px;width:7px;height:2px;background:#9c9c9c;"></div>
<div class="a" style="left:209px;top:809.0px;width:7px;height:2px;background:#9c9c9c;"></div>
<div class="a" style="left:203px;top:177.9px;width:13.2px;height:14px;border:1.5px solid #989898;background:#1e1e1e"></div>
<div class="a" style="left:205.8px;top:184.0px;width:7.6px;height:1.8px;background:#d8d8d8;"></div>
<div class="a" style="left:203px;top:254.4px;width:13.2px;height:14px;border:1.5px solid #989898;background:#1e1e1e"></div>
<div class="a" style="left:205.8px;top:260.5px;width:7.6px;height:1.8px;background:#d8d8d8;"></div>
<div class="a" style="left:203px;top:324.9px;width:13.2px;height:14px;border:1.5px solid #989898;background:#1e1e1e"></div>
<div class="a" style="left:205.8px;top:331.0px;width:7.6px;height:1.8px;background:#d8d8d8;"></div>
<div class="a" style="left:203px;top:465.9px;width:13.2px;height:14px;border:1.5px solid #989898;background:#1e1e1e"></div>
<div class="a" style="left:205.8px;top:472.0px;width:7.6px;height:1.8px;background:#d8d8d8;"></div>
<div class="a" style="left:203px;top:561.9px;width:13.2px;height:14px;border:1.5px solid #989898;background:#1e1e1e"></div>
<div class="a" style="left:205.8px;top:568.0px;width:7.6px;height:1.8px;background:#d8d8d8;"></div>
<svg style="left:338px;top:247.0px" width="75" height="28" viewBox="0 0 75 28"><rect x="1" y="1" width="72.4" height="25.6" fill="#2c2c2c" stroke="#e4e4e4" stroke-width="2" stroke-dasharray="2.2 4.5"/></svg>
<div class="ln" style="top:171.5px">1</div>
<div class="code" style="top:171.5px"><span class="k">using</span> AzFunc<span class="o">.</span>Models;</div>
<div class="ln" style="top:197.0px">2</div>
<div class="code" style="top:197.0px"><span class="k">using</span> Microsoft<span class="o">.</span>EntityFrameworkCore;</div>
<div class="ln" style="top:222.5px">3</div>
<div class="ln" style="top:248.0px">4</div>
<div class="code" style="top:248.0px"><span class="k">namespace</span> AzFunc<span class="o">.</span>DbContexts</div>
<div class="ln" style="top:273.5px">5</div>
<div class="code" style="top:273.5px">{</div>
<div class="ln" style="top:318.5px">6</div>
<div class="code" style="top:318.5px">    <span class="k">public</span> <span class="k">class</span> <span class="c">TodoDbContext</span> : <span class="c">DbContext</span></div>
<div class="ln" style="top:344.0px">7</div>
<div class="code" style="top:344.0px">    {</div>
<div class="ln" style="top:389.0px">8</div>
<div class="code" style="top:389.0px">        <span class="k">public</span> <span class="c">DbSet</span>&lt;<span class="c">Todos</span>&gt; <span style="position:relative">todos<svg style="left:0;top:20px" width="26" height="6" viewBox="0 0 26 6"><g fill="#9a9a9a"><circle cx="4.1" cy="2.7" r="1.5"/><circle cx="10.1" cy="2.7" r="1.5"/><circle cx="16.1" cy="2.7" r="1.5"/><circle cx="22.1" cy="2.7" r="1.5"/></g></svg></span> { <span class="k">get</span>; <span class="k">set</span>; }</div>
<div class="ln" style="top:414.5px">9</div>
<div class="ln" style="top:459.5px">10</div>
<div class="code" style="top:459.5px">        <span class="k">public</span> <span class="c">TodoDbContext</span>(<span class="c">DbContextOptions</span> <span class="v">op</span>) : <span class="k">base</span>(<span class="v">op</span>)</div>
<div class="ln" style="top:485.0px">11</div>
<div class="code" style="top:485.0px">        { }</div>
<div class="ln" style="top:510.5px">12</div>
<div class="ln" style="top:555.5px">13</div>
<div class="code" style="top:555.5px">        <span class="k">protected</span> <span class="k">override</span> <span class="k">void</span> <span class="m">OnModelCreating</span>(<span class="c">ModelBuilder</span> <span class="v">builder</span>)</div>
<div class="ln" style="top:581.0px">14</div>
<div class="code" style="top:581.0px">        {</div>
<div class="ln" style="top:606.5px">15</div>
<div class="code" style="top:606.5px">            <span class="v">builder</span><span class="o">.</span><span class="m">Entity</span>&lt;<span class="c">Todos</span>&gt;()<span class="o">.</span><span class="m">HasKey</span>(<span class="v">x</span> <span class="arr"><svg style="left:1.8px;top:4px" width="23" height="15" viewBox="0 0 23 15"><path d="M0 4.7H18.5M0 9.7H18.5" stroke="#b8b8b4" stroke-width="2" fill="none"/><path d="M14.2 0.6L22.3 7.2L14.2 13.8" stroke="#b8b8b4" stroke-width="1.8" fill="none"/></svg></span> <span class="v">x</span><span class="o">.</span>Id);</div>
<div class="ln" style="top:632.0px">16</div>
<div class="code" style="top:632.0px">            <span class="v">builder</span><span class="o">.</span><span class="m">Entity</span>&lt;<span class="c">Todos</span>&gt;()<span class="o">.</span><span class="m">HasIndex</span>(<span class="v">x</span> <span class="arr"><svg style="left:1.8px;top:4px" width="23" height="15" viewBox="0 0 23 15"><path d="M0 4.7H18.5M0 9.7H18.5" stroke="#b8b8b4" stroke-width="2" fill="none"/><path d="M14.2 0.6L22.3 7.2L14.2 13.8" stroke="#b8b8b4" stroke-width="1.8" fill="none"/></svg></span> <span class="v">x</span><span class="o">.</span>Id);</div>
<div class="ln" style="top:657.5px">17</div>
<div class="code" style="top:657.5px">            <span class="v">builder</span><span class="o">.</span><span class="m">Entity</span>&lt;<span class="c">Todos</span>&gt;()<span class="o">.</span><span class="m">Property</span>(<span class="v">x</span> <span class="arr"><svg style="left:1.8px;top:4px" width="23" height="15" viewBox="0 0 23 15"><path d="M0 4.7H18.5M0 9.7H18.5" stroke="#b8b8b4" stroke-width="2" fill="none"/><path d="M14.2 0.6L22.3 7.2L14.2 13.8" stroke="#b8b8b4" stroke-width="1.8" fill="none"/></svg></span> <span class="v">x</span><span class="o">.</span>Name)<span class="o">.</span><span class="m">HasMaxLength</span>(<span class="n">60</span>)<span class="o">.</span><span class="m">IsRequired</span>();</div>
<div class="ln" style="top:683.0px">18</div>
<div class="code" style="top:683.0px">            <span class="v">builder</span><span class="o">.</span><span class="m">Entity</span>&lt;<span class="c">Todos</span>&gt;()<span class="o">.</span><span class="m">Property</span>(<span class="v">x</span> <span class="arr"><svg style="left:1.8px;top:4px" width="23" height="15" viewBox="0 0 23 15"><path d="M0 4.7H18.5M0 9.7H18.5" stroke="#b8b8b4" stroke-width="2" fill="none"/><path d="M14.2 0.6L22.3 7.2L14.2 13.8" stroke="#b8b8b4" stroke-width="1.8" fill="none"/></svg></span> <span class="v">x</span><span class="o">.</span>Description)<span class="o">.</span><span class="m">HasMaxLength</span>(<span class="n">500</span>)<span class="o">.</span><span class="m">IsRequired</span>();</div>
<div class="ln" style="top:708.5px">19</div>
<div class="code" style="top:708.5px">            <span class="v">builder</span><span class="o">.</span><span class="m">Entity</span>&lt;<span class="c">Todos</span>&gt;()<span class="o">.</span><span class="m">Property</span>(<span class="v">x</span> <span class="arr"><svg style="left:1.8px;top:4px" width="23" height="15" viewBox="0 0 23 15"><path d="M0 4.7H18.5M0 9.7H18.5" stroke="#b8b8b4" stroke-width="2" fill="none"/><path d="M14.2 0.6L22.3 7.2L14.2 13.8" stroke="#b8b8b4" stroke-width="1.8" fill="none"/></svg></span> <span class="v">x</span><span class="o">.</span>Comment)<span class="o">.</span><span class="m">HasMaxLength</span>(<span class="n">300</span>);</div>
<div class="ln" style="top:734.0px">20</div>
<div class="code" style="top:734.0px">        }</div>
<div class="ln" style="top:759.5px">21</div>
<div class="code" style="top:759.5px">    }</div>
<div class="ln" style="top:785.0px">22</div>
<div class="code" style="top:785.0px">}</div>
<div class="ln" style="top:810.5px">23</div>
<div class="cl" style="left:266.5px;top:300.2px">5 references</div>
<div class="cl" style="left:314.5px;top:370.7px">0 references</div>
<div class="cl" style="left:314.5px;top:441.2px">1 reference</div>
<div class="cl" style="left:314.5px;top:537.2px">0 references</div>
<svg style="left:75px;top:323.5px" width="18" height="18" viewBox="0 0 18 18"><g fill="#5f9de0"><path d="M0 3L6.5 0.5L8.2 5L1.7 7.5Z"/><path d="M9 5.5L15 3.3L16.6 7.5L10.5 9.7Z"/><path d="M8.5 13L14.5 10.6L16.1 14.6L10 16.7Z"/></g><path d="M4.5 7.2H9.5M6 7V15.6H9.2" fill="none" stroke="#e6e6e6" stroke-width="1.9"/></svg>
<svg style="left:870px;top:207px" width="18" height="29" viewBox="0 0 18 29"><g fill="#000"><rect x="0.9" y="0.9" width="16.3" height="4.2"/><rect x="0.9" y="23.9" width="16.3" height="4.2"/><rect x="6.9" y="3" width="4.3" height="23"/></g><g fill="#f4f4f4"><rect x="1.9" y="1.9" width="14.3" height="2.2"/><rect x="1.9" y="24.9" width="14.3" height="2.3"/><rect x="7.9" y="3" width="2.3" height="23"/></g><rect x="8.3" y="1.6" width="1.5" height="1.3" fill="#000"/><rect x="8.3" y="26.1" width="1.5" height="1.3" fill="#000"/></svg>
<div class="a" style="left:2386px;top:169.6px;width:121.2px;height:1100.4px;background:#3e3e42;"></div>
<div class="a" style="left:2507.2px;top:138px;width:1.3px;height:1160px;background:#46464b;"></div>
<svg style="left:2439.6px;top:178.8px" width="13.8" height="7.3" viewBox="0 0 13.8 7.3"><path d="M0 7.3L6.9 0L13.8 7.3Z" fill="#999"/></svg>
<svg style="left:2439.8px;top:1256.2px" width="13.6" height="7" viewBox="0 0 13.6 7"><path d="M0 0H13.6L6.8 7Z" fill="#999"/></svg>
<div class="a" style="left:2386px;top:194px;width:121px;height:646px;background:#000;border:1px solid #5a5a5e;border-radius:3px"></div>
<div class="a" style="left:2387px;top:195px;width:6px;height:352px;background:#577a2e;"></div>
<div class="a" style="left:2386px;top:550px;width:121px;height:3px;background:#f1f1f1;"></div>
<div class="a" style="left:2412px;top:309px;width:8px;height:9px;background:#b4b4b4;"></div>
<div class="a" style="left:2419px;top:198.9px;width:5px;height:3.4px;background:#569cd6;opacity:.42"></div>
<div class="a" style="left:2425px;top:198.9px;width:12px;height:3.4px;background:#cfcfcf;opacity:.42"></div>
<div class="a" style="left:2419px;top:215.9px;width:5px;height:3.4px;background:#569cd6;opacity:.42"></div>
<div class="a" style="left:2425px;top:215.9px;width:24px;height:3.4px;background:#cfcfcf;opacity:.42"></div>
<div class="a" style="left:2419px;top:246.9px;width:8px;height:3.4px;background:#569cd6;opacity:.42"></div>
<div class="a" style="left:2428px;top:246.9px;width:14px;height:3.4px;background:#cfcfcf;opacity:.42"></div>
<div class="a" style="left:2420px;top:263.1px;width:1px;height:5px;background:#cfcfcf;opacity:.42"></div>
<div class="a" style="left:2422px;top:278.90000000000003px;width:10px;height:3.4px;background:#569cd6;opacity:.42"></div>
<div class="a" style="left:2433px;top:278.90000000000003px;width:13px;height:3.4px;background:#4ec9b0;opacity:.42"></div>
<div class="a" style="left:2447px;top:278.90000000000003px;width:8px;height:3.4px;background:#cfcfcf;opacity:.42"></div>
<div class="a" style="left:2423px;top:294.1px;width:1px;height:5px;background:#cfcfcf;opacity:.42"></div>
<div class="a" style="left:2426px;top:311.90000000000003px;width:6px;height:3.4px;background:#569cd6;opacity:.42"></div>
<div class="a" style="left:2433px;top:311.90000000000003px;width:14px;height:3.4px;background:#cfcfcf;opacity:.42"></div>
<div class="a" style="left:2448px;top:311.90000000000003px;width:4px;height:3.4px;background:#569cd6;opacity:.42"></div>
<div class="a" style="left:2453px;top:311.90000000000003px;width:4px;height:3.4px;background:#569cd6;opacity:.42"></div>
<div class="a" style="left:2458px;top:311.90000000000003px;width:3px;height:3.4px;background:#cfcfcf;opacity:.42"></div>
<div class="a" style="left:2426px;top:342.90000000000003px;width:5px;height:3.4px;background:#569cd6;opacity:.42"></div>
<div class="a" style="left:2432px;top:342.90000000000003px;width:13px;height:3.4px;background:#4ec9b0;opacity:.42"></div>
<div class="a" style="left:2446px;top:342.90000000000003px;width:18px;height:3.4px;background:#cfcfcf;opacity:.42"></div>
<div class="a" style="left:2465px;top:342.90000000000003px;width:3px;height:3.4px;background:#9cdcfe;opacity:.42"></div>
<div class="a" style="left:2469px;top:342.90000000000003px;width:4px;height:3.4px;background:#cfcfcf;opacity:.42"></div>
<div class="a" style="left:2426px;top:359.90000000000003px;width:4px;height:3.4px;background:#cfcfcf;opacity:.42"></div>
<div class="a" style="left:2426px;top:390.90000000000003px;width:18px;height:3.4px;background:#569cd6;opacity:.42"></div>
<div class="a" style="left:2445px;top:390.90000000000003px;width:2px;height:3.4px;background:#dcdcaa;opacity:.42"></div>
<div class="a" style="left:2448px;top:390.90000000000003px;width:20px;height:3.4px;background:#dcdcaa;opacity:.42"></div>
<div class="a" style="left:2469px;top:390.90000000000003px;width:10px;height:3.4px;background:#cfcfcf;opacity:.42"></div>
<div class="a" style="left:2426px;top:406.1px;width:1px;height:5px;background:#cfcfcf;opacity:.42"></div>
<div class="a" style="left:2429px;top:422.90000000000003px;width:34px;height:3.4px;background:#cfcfcf;opacity:.42"></div>
<div class="a" style="left:2429px;top:438.90000000000003px;width:36px;height:3.4px;background:#cfcfcf;opacity:.42"></div>
<div class="a" style="left:2429px;top:453.90000000000003px;width:64px;height:3.4px;background:#cfcfcf;opacity:.42"></div>
<div class="a" style="left:2429px;top:470.90000000000003px;width:70px;height:3.4px;background:#cfcfcf;opacity:.42"></div>
<div class="a" style="left:2429px;top:486.90000000000003px;width:56px;height:3.4px;background:#cfcfcf;opacity:.42"></div>
<div class="a" style="left:2426px;top:500.1px;width:1px;height:5px;background:#9a9a9a;opacity:.42"></div>
<div class="a" style="left:2423px;top:517.1px;width:1px;height:5px;background:#9a9a9a;opacity:.42"></div>
<div class="a" style="left:2420px;top:533.1px;width:1px;height:5px;background:#9a9a9a;opacity:.42"></div>
<div class="a" style="left:45px;top:1270.6px;width:2464px;height:27.4px;background:#3e3e42;"></div>
<div class="a" style="left:46px;top:1272px;width:88px;height:23px;background:#333337;border:1px solid #434346"></div>
<div class="t ui" style="left:47.54px;top:1272.34px;color:#f1f1f1;font-size:17.5px;letter-spacing:-0.47px;">100 %</div>
<svg style="left:121.5px;top:1281.5px" width="9" height="5.0" viewBox="0 0 9 5.0"><path d="M0 0H9L4.5 5.0Z" fill="#f1f1f1"/></svg>
<svg style="left:169px;top:1273px" width="20" height="20" viewBox="0 0 20 20"><circle cx="10" cy="10" r="9.2" fill="#388a34" stroke="#e8e8e8" stroke-width="1.4"/><path d="M5 10.5L8.5 14L15 6.5" fill="none" stroke="#fff" stroke-width="2.4"/></svg>
<div class="t ui" style="left:194.52px;top:1272.34px;color:#f1f1f1;font-size:17.5px;letter-spacing:-0.47px;">No issues found</div>
<div class="a" style="left:408px;top:1274px;width:2px;height:19px;background:#d0d0d0;"></div>
<svg style="left:431px;top:1274px" width="18" height="18" viewBox="0 0 18 18"><path d="M6.5 5.5L12.5 11.5L7 17L1 11Z" fill="none" stroke="#c8c8c8" stroke-width="1.6"/><path d="M9.5 3.5L14 8L12 10L7.5 5.5Z" fill="#c8c8c8"/><path d="M12.5 5L16 1" stroke="#c8c8c8" stroke-width="1.6"/><path d="M4 9L9.5 14.5" stroke="#c8c8c8" stroke-width="1.2"/></svg>
<svg style="left:456.0px;top:1280.5px" width="11" height="6.0" viewBox="0 0 11 6.0"><path d="M0 0H11L5.5 6.0Z" fill="#f1f1f1"/></svg>
<svg style="left:512px;top:1277px" width="7" height="13" viewBox="0 0 7 13"><path d="M7 0V13L0 6.5Z" fill="#55555a"/></svg>
<svg style="left:2177px;top:1277px" width="7" height="13" viewBox="0 0 7 13"><path d="M0 0V13L7 6.5Z" fill="#55555a"/></svg>
<div class="t ui" style="left:2225.87px;top:1272.34px;color:#e8e8e8;font-size:17.5px;letter-spacing:-0.47px;">Ln: 23</div>
<div class="t ui" style="left:2313.33px;top:1272.34px;color:#e8e8e8;font-size:17.5px;letter-spacing:-0.47px;">Ch: 1</div>
<div class="t ui" style="left:2391.92px;top:1272.34px;color:#e8e8e8;font-size:17.5px;letter-spacing:-0.47px;">SPC</div>
<div class="t ui" style="left:2451.33px;top:1272.34px;color:#e8e8e8;font-size:17.5px;letter-spacing:-0.47px;">CRLF</div>
<div class="t ui" style="left:42.45px;top:1309.13px;color:#d8d8d8;font-size:18.3px;letter-spacing:0px;">Error List</div>
<div class="t ui" style="left:170.49px;top:1309.13px;color:#d8d8d8;font-size:18.3px;letter-spacing:0px;">Output</div>
<div class="a" style="left:43px;top:1336px;width:110px;height:9px;background:#3f3f46;"></div>
<div class="a" style="left:171px;top:1336px;width:66px;height:9px;background:#3f3f46;"></div>
<div class="a" style="left:0px;top:1345px;width:2554px;height:33px;background:#007acc;"></div>
<svg style="left:2px;top:1353px" width="25" height="17" viewBox="0 0 25 17"><path d="M5 1H24L20 16H1Z" fill="none" stroke="#f1f1f1" stroke-width="1.6"/></svg>
<div class="t ui" style="left:37.45px;top:1351.13px;color:#ffffff;font-size:18.3px;letter-spacing:0px;-webkit-text-stroke:0.35px #fff">Ready</div>
<svg style="left:2196px;top:1353px" width="14" height="18" viewBox="0 0 14 18"><path d="M7 17V2M1 8L7 2L13 8" fill="none" stroke="#e0e0e0" stroke-width="2.6"/></svg>
<div class="t ui" style="left:2224.50px;top:1349.13px;color:#ffffff;font-size:18.3px;letter-spacing:0px;-webkit-text-stroke:0.35px #fff">Add to Source Control</div>
<svg style="left:2464px;top:1356px" width="12" height="7" viewBox="0 0 12 7"><path d="M0 7L6 0L12 7Z" fill="#f1f1f1"/></svg>
<svg style="left:2508px;top:1351px" width="22" height="22" viewBox="0 0 22 22"><path d="M2 17C4.5 15 4.5 12 4.5 9C4.5 4 7.5 1 11 1C14.5 1 17.5 4 17.5 9C17.5 12 17.5 15 20 17Z" fill="#d0d0d0"/><path d="M8 18.5A3 3 0 0 0 14 18.5Z" fill="#d0d0d0"/></svg>
<div class="a" style="left:0px;top:1378px;width:2554px;height:3px;background:#212d37;"></div>
<div class="a" style="left:0;top:1379.6px;width:2554px;height:1.4px;background:repeating-linear-gradient(to right,transparent 0,transparent 7px,#8e8e8e 7px,#8e8e8e 14px,transparent 14px,transparent 15px)"></div>
</body></html>
